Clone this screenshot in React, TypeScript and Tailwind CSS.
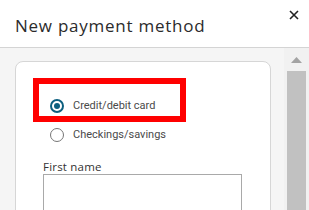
import React from "react";

function Radio({ checked }: { checked?: boolean }) {
  return checked ? (
    <span className="flex h-[14px] w-[14px] items-center justify-center rounded-full border-2 border-[#0d5f7f] bg-white">
      <span className="h-[6px] w-[6px] rounded-full bg-[#0d5f7f]" />
    </span>
  ) : (
    <span className="h-[14px] w-[14px] rounded-full border border-[#767676] bg-white" />
  );
}

export default function App() {
  return (
    <div className="flex h-[210px] w-[309px] flex-col overflow-hidden bg-white">
      <div className="relative flex h-[48px] shrink-0 items-center border-b border-[#d4d4d4] pl-[15px] pt-[3px]">
        <h1 className="font-['Open_Sans',sans-serif] text-[17px] tracking-[0.75px] text-[#2b2b2b] leading-none">
          New payment method
        </h1>
        <button className="absolute right-[9px] top-[8px] flex h-[13px] w-[13px] items-center justify-center text-[#222]">
          <svg width="10" height="10" viewBox="0 0 10 10">
            <path d="M1 1L9 9M9 1L1 9" stroke="currentColor" strokeWidth="1.6" />
          </svg>
        </button>
      </div>
      <div className="flex min-h-0 flex-1">
        <div className="flex-1 bg-[#f5f5f5] pl-[15px] pr-[13px] pt-[13px]">
          <div className="relative h-[200px] rounded-t-[8px] border border-[#d6d6d6] bg-white pl-[34px] pt-[36px]">
            <div className="flex flex-col gap-[12px] font-['Roboto',sans-serif] text-[11px] text-[#4a4a4a]">
              <label className="flex items-center gap-[9px]">
                <Radio checked />
                <span>Credit/debit card</span>
              </label>
              <label className="flex items-center gap-[9px]">
                <Radio />
                <span>Checkings/savings</span>
              </label>
            </div>
            <div className="absolute left-[17px] top-[16px] h-[44px] w-[153px] border-[6px] border-[#ff0000]" />
            <div className="ml-[-7px] mt-[17px] font-['Open_Sans',sans-serif] text-[11.5px] leading-[14px] tracking-[0.2px] text-[#333]">
              First name
            </div>
            <div className="ml-[-7px] h-[40px] w-[199px] border border-[#a9a9a9]" />
          </div>
        </div>
        <div className="flex w-[25px] flex-col bg-[#f1f1f1] pl-[3px] pr-[3px]">
          <div className="flex h-[23px] items-center justify-center">
            <svg width="11" height="6" viewBox="0 0 11 6">
              <path d="M5.5 0L11 6H0Z" fill="#a3a3a3" />
            </svg>
          </div>
          <div className="flex-1 bg-[#c1c1c1]" />
        </div>
      </div>
    </div>
  );
}
